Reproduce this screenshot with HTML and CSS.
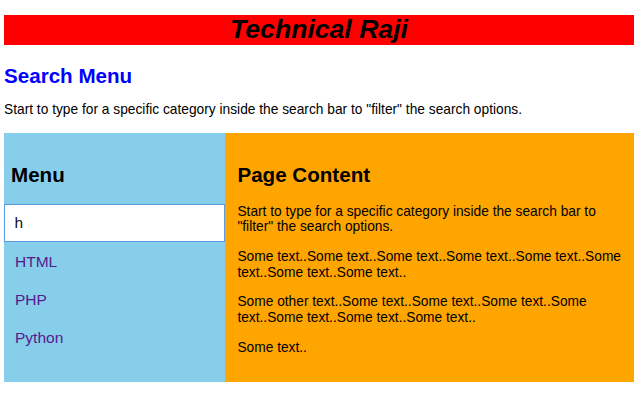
FILE: index.html
```html
<!DOCTYPE html>
<html lang="en">
<head>
<meta charset="utf-8">
<title>Search Menu</title>
<link rel="stylesheet" href="styles.css">
</head>
<body>
<h1 class="title">Technical Raji</h1>
<h2 class="page-title">Search Menu</h2>
<p class="intro">Start to type for a specific category inside the search bar to "filter" the search options.</p>
<div class="row">
  <div class="left">
    <h2 class="col-title menu-title">Menu</h2>
    <input class="search" type="text" value="h" aria-label="Search">
    <ul class="menu">
      <li><a href="#">HTML</a></li>
      <li><a href="#">PHP</a></li>
      <li><a href="#">Python</a></li>
    </ul>
  </div>
  <div class="right">
    <h2 class="col-title">Page Content</h2>
    <p>Start to type for a specific category inside the search bar to "filter" the search options.</p>
    <p>Some text..Some text..Some text..Some text..Some text..Some text..Some text..Some text..</p>
    <p>Some other text..Some text..Some text..Some text..Some text..Some text..Some text..Some text..</p>
    <p>Some text..</p>
  </div>
</div>
</body>
</html>
```
FILE: styles.css
```css
* { box-sizing: border-box; }
body {
  margin: 0 6px 0 4px;
  font-family: "Liberation Sans", Arial, Helvetica, sans-serif;
  font-size: 13.75px;
  line-height: 15.8px;
  color: #000;
  background: #fff;
}
.title {
  margin: 15px 0 0;
  height: 30px;
  line-height: 28px;
  background: #ff0000;
  text-align: center;
  font-size: 26.6px;
  font-style: italic;
  font-weight: bold;
}
.page-title {
  margin: 18.5px 0 0;
  font-size: 20.6px;
  line-height: 23.7px;
  color: #0000ff;
}
.intro {
  margin: 15.2px 0 0;
}
.row {
  display: flex;
  margin-top: 14.8px;
}
.left {
  flex: 0 0 35%;
  background: #87ceeb;
  padding: 12.9px 0;
}
.right {
  flex: 1 1 65%;
  background: #ffa500;
  padding: 12.9px;
}
.col-title {
  margin: 17.6px 0 16.5px;
  font-size: 20.6px;
  line-height: 23.7px;
}
.menu-title {
  padding-left: 7px;
}
.search {
  display: block;
  width: 100%;
  margin: 0;
  font-family: "Liberation Sans", Arial, sans-serif;
  font-size: 15.5px;
  line-height: 17.8px;
  padding: 9.4px 9.5px;
  border: 1px solid #5d9cdc;
  outline: none;
  background: #fff;
  color: #111;
}
.menu {
  list-style: none;
  margin: 0;
  padding: 0;
}
.menu a {
  display: block;
  padding: 10.3px 11px;
  font-size: 15.5px;
  line-height: 17.8px;
  color: #551a8b;
  text-decoration: none;
}
.right p {
  margin: 0 0 13.75px;
}
```
